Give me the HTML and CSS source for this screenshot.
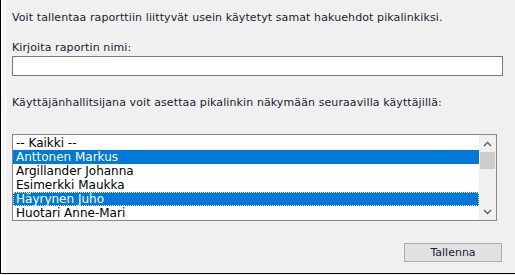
FILE: index.html
```html
<!DOCTYPE html>
<html lang="fi">
<head>
    <meta charset="UTF-8">
    <title>Tallenna pikalinkki</title>
    <link rel="stylesheet" href="styles.css">
</head>
<body>
    <div class="dialog">
        <p class="intro">Voit tallentaa raporttiin liittyvät usein käytetyt samat hakuehdot pikalinkiksi.</p>

        <label class="field-label" for="report-name">Kirjoita raportin nimi:</label>
        <input type="text" id="report-name" class="name-input">

        <p class="users-label">Käyttäjänhallitsijana voit asettaa pikalinkin näkymään seuraavilla käyttäjillä:</p>

        <div class="listbox">
            <ul class="options">
                <li>-- Kaikki --</li>
                <li class="selected">Anttonen Markus</li>
                <li>Argillander Johanna</li>
                <li>Esimerkki Maukka</li>
                <li class="selected focused">Häyrynen Juho</li>
                <li>Huotari Anne-Mari</li>
            </ul>
            <div class="scrollbar">
                <span class="arrow up">
                    <svg width="9" height="6" viewBox="0 0 9 6"><path d="M1 5 L4.5 1.5 L8 5" fill="none" stroke="#606060" stroke-width="1.4"/></svg>
                </span>
                <span class="thumb"></span>
                <span class="track"></span>
                <span class="arrow down">
                    <svg width="9" height="6" viewBox="0 0 9 6"><path d="M1 1 L4.5 4.5 L8 1" fill="none" stroke="#606060" stroke-width="1.4"/></svg>
                </span>
            </div>
        </div>

        <div class="actions">
            <button class="save">Tallenna</button>
        </div>
    </div>
</body>
</html>
```

FILE: styles.css
```css
body {
    margin: 0;
    background-color: #f0f0f0;
    font-family: "DejaVu Sans", Verdana, sans-serif;
    font-size: 11px;
    color: #1c1c30;
}

.dialog {
    height: 274px;
    box-sizing: border-box;
    border-left: 1px solid #000;
    border-bottom: 1px solid #000;
    background: linear-gradient(to right, #f7f7f7 0, #f7f7f7 6px, #f0f0f0 6px);
    padding: 11px 12px 0 11px;
}

.intro {
    margin: 0;
    line-height: 14px;
    letter-spacing: 0.1px;
}

.field-label {
    display: block;
    margin-top: 16px;
    line-height: 14px;
    letter-spacing: 0.1px;
}

.name-input {
    display: block;
    box-sizing: border-box;
    width: 491px;
    height: 20px;
    margin-top: 1px;
    border: 1px solid #7a7a7a;
    background: #fff;
    padding: 0 3px;
}

.users-label {
    margin: 20px 0 0;
    line-height: 14px;
    letter-spacing: 0.1px;
}

.listbox {
    display: flex;
    width: 485px;
    height: 87px;
    box-sizing: border-box;
    margin-top: 24px;
    border: 1px solid #828790;
    background: #fff;
}

.options {
    flex: 1;
    list-style: none;
    margin: 0;
    padding: 1px 0 0;
    font-size: 12px;
    color: #000;
}

.options li {
    height: 14px;
    line-height: 14px;
    padding-left: 3px;
    white-space: nowrap;
}

.options li.selected {
    background-color: #0078d7;
    color: #fff;
}

.options li.focused {
    outline: 1px dotted #fff;
    outline-offset: -1px;
}

.scrollbar {
    width: 17px;
    display: flex;
    flex-direction: column;
    background: #f0f0f0;
}

.arrow {
    height: 17px;
    display: flex;
    align-items: center;
    justify-content: center;
}

.thumb {
    height: 17px;
    margin: 0 1px;
    background: #cdcdcd;
}

.track {
    flex: 1;
}

.actions {
    display: flex;
    justify-content: flex-end;
    margin-top: 22px;
}

.save {
    width: 98px;
    height: 19px;
    box-sizing: border-box;
    border: 1px solid #adadad;
    background: #e1e1e1;
    font-family: "DejaVu Sans", Tahoma, sans-serif;
    font-size: 11px;
    color: #1c1c30;
    padding: 0;
    margin-right: 1px;
}
```
